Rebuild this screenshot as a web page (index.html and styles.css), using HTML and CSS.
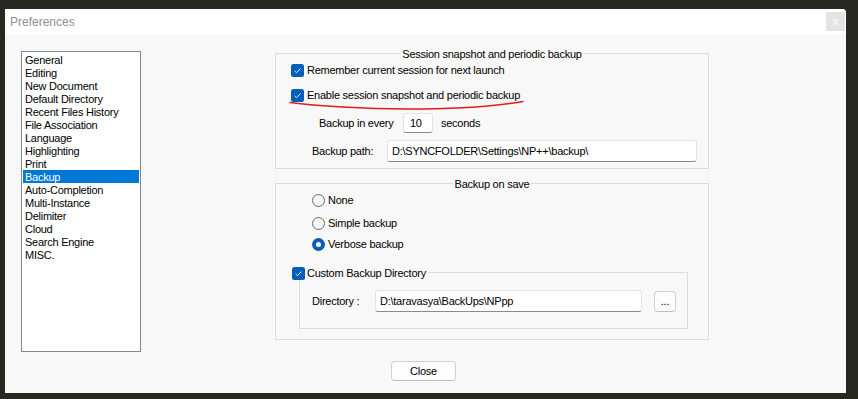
FILE: index.html
```html
<!DOCTYPE html>
<html lang="en">
<head>
    <meta charset="UTF-8">
    <title>Preferences</title>
    <link rel="stylesheet" href="styles.css">
</head>
<body>
    <!-- Preferences dialog -->
    <div class="dialog">
        <div class="titlebar">
            <span class="title">Preferences</span>
            <span class="close-x">x</span>
        </div>

        <div class="dialog-body">
            <div class="main">
                <ul class="page-list">
                    <li>General</li>
                    <li>Editing</li>
                    <li>New Document</li>
                    <li>Default Directory</li>
                    <li>Recent Files History</li>
                    <li>File Association</li>
                    <li>Language</li>
                    <li>Highlighting</li>
                    <li>Print</li>
                    <li class="selected">Backup</li>
                    <li>Auto-Completion</li>
                    <li>Multi-Instance</li>
                    <li>Delimiter</li>
                    <li>Cloud</li>
                    <li>Search Engine</li>
                    <li>MISC.</li>
                </ul>

                <div class="panel">
                    <!-- Session snapshot -->
                    <div class="group group-session">
                        <div class="group-title">Session snapshot and periodic backup</div>
                        <div class="row check-row row-remember">
                            <svg class="check" viewBox="0 0 13 13"><rect width="13" height="13" rx="2.5" fill="#005fb8"/><path d="M3.6 6.9 L5.5 8.7 L9.4 4.6" stroke="#fff" stroke-width="0.9" fill="none"/></svg>
                            <span>Remember current session for next launch</span>
                        </div>
                        <div class="row check-row row-snapshot">
                            <svg class="check" viewBox="0 0 13 13"><rect width="13" height="13" rx="2.5" fill="#005fb8"/><path d="M3.6 6.9 L5.5 8.7 L9.4 4.6" stroke="#fff" stroke-width="0.9" fill="none"/></svg>
                            <span>Enable session snapshot and periodic backup</span>
                            <svg class="scribble" width="260" height="30" viewBox="0 0 260 30"><path d="M14 14.5 C 40 18, 90 21, 130 21 C 180 21, 220 18, 247 13.5" stroke="#e31b1b" stroke-width="1.4" fill="none" stroke-linecap="round"/></svg>
                        </div>
                        <div class="row every-row">
                            <span class="every-label">Backup in every</span>
                            <span class="field field-seconds">10</span>
                            <span class="unit">seconds</span>
                        </div>
                        <div class="row path-row">
                            <span class="path-label">Backup path:</span>
                            <span class="field field-path">D:\SYNCFOLDER\Settings\NP++\backup\</span>
                        </div>
                    </div>

                    <!-- Backup on save -->
                    <div class="group group-save">
                        <div class="group-title">Backup on save</div>
                        <div class="row radio-row row-none"><span class="radio"></span><span>None</span></div>
                        <div class="row radio-row row-simple"><span class="radio"></span><span>Simple backup</span></div>
                        <div class="row radio-row row-verbose"><span class="radio on"></span><span>Verbose backup</span></div>

                        <div class="subgroup">
                            <div class="subgroup-title">
                                <svg class="check" viewBox="0 0 13 13"><rect width="13" height="13" rx="2.5" fill="#005fb8"/><path d="M3.6 6.9 L5.5 8.7 L9.4 4.6" stroke="#fff" stroke-width="0.9" fill="none"/></svg>
                                <span>Custom Backup Directory</span>
                            </div>
                            <div class="row dir-row">
                                <span class="dir-label">Directory :</span>
                                <span class="field field-dir">D:\taravasya\BackUps\NPpp</span>
                                <span class="btn btn-browse">...</span>
                            </div>
                        </div>
                    </div>
                </div>
            </div>

            <div class="footer">
                <button class="btn btn-close">Close</button>
            </div>
        </div>
    </div>
</body>
</html>
```

FILE: styles.css
```css
/* Base */
* {
    box-sizing: border-box;
}

html,
body {
    margin: 0;
    height: 399px;
    overflow: hidden;
}

body {
    background: #272822;
    padding: 9px 0 0 5px;
    font-family: 'Liberation Sans', Arial, sans-serif;
    font-size: 11px;
    letter-spacing: -0.25px;
    color: #000;
}

/* Dialog window */
.dialog {
    width: 841px;
    height: 384px;
    background: #f8f8f8;
    border-radius: 0 4px 0 0;
    overflow: hidden;
}

.titlebar {
    height: 25px;
    background: #fff;
    display: flex;
    align-items: center;
    padding-left: 5px;
}

.title {
    font-size: 12px;
    letter-spacing: 0;
    color: #8f8f8f;
}

.close-x {
    margin-left: auto;
    margin-right: 1px;
    align-self: flex-start;
    margin-top: 3px;
    width: 19px;
    height: 19px;
    background: #e4e4e4;
    color: #f7f7f7;
    font-weight: bold;
    text-align: center;
    line-height: 18px;
}

.dialog-body {
    padding: 17px 0 0 16px;
}

.main {
    display: flex;
    align-items: flex-start;
}

/* Page list */
.page-list {
    list-style: none;
    margin: 0;
    width: 120px;
    height: 301px;
    padding: 1px;
    background: #fff;
    border: 1px solid #828790;
}

.page-list li {
    height: 13px;
    line-height: 14px;
    padding-left: 2px;
    white-space: nowrap;
}

.page-list li.selected {
    background: #0078d7;
    color: #fff;
}

/* Right panel */
.panel {
    margin-left: 134px;
    margin-top: 2px;
    width: 434px;
}

.group {
    display: flex;
    flex-direction: column;
    border: 1px solid #dcdcdc;
}

.group-title {
    align-self: center;
    margin-top: -7px;
    padding: 0 2px;
    line-height: 14px;
    background: #f8f8f8;
}

.row {
    display: flex;
    align-items: center;
    white-space: nowrap;
}

.check {
    width: 13px;
    height: 13px;
    flex: none;
    margin-right: 3px;
}

/* Session snapshot group */
.group-session {
    height: 116px;
}

.check-row {
    height: 14px;
    padding-left: 15px;
    position: relative;
}

.row-remember {
    margin-top: 2px;
}

.row-snapshot {
    margin-top: 11px;
}

.scribble {
    position: absolute;
    left: 0;
    top: 0;
}

.every-row {
    margin-top: 11px;
    height: 20px;
    padding-left: 43px;
}

.every-label {
    width: 84px;
}

.unit {
    margin-left: 8px;
}

.path-row {
    margin-top: 7px;
    height: 22px;
    padding-left: 36px;
}

.path-label {
    width: 75px;
}

/* Text fields */
.field {
    display: flex;
    align-items: center;
    height: 100%;
    padding: 0 4px;
    background: #fff;
    border: 1px solid #e3e3e3;
    border-bottom-color: #8a8a8a;
    border-radius: 3px;
}

.field-seconds {
    width: 30px;
    padding-left: 6px;
}

.field-path {
    width: 310px;
}

/* Backup on save group */
.group-save {
    margin-top: 14px;
    height: 157px;
}

.radio-row {
    height: 14px;
    padding-left: 36px;
}

.row-none {
    margin-top: 2px;
}

.row-simple {
    margin-top: 9px;
}

.row-verbose {
    margin-top: 7px;
}

.radio {
    width: 13px;
    height: 13px;
    flex: none;
    margin-right: 3px;
    border-radius: 50%;
    border: 1px solid #6a6a6a;
    background: #f4f4f4;
    display: flex;
    align-items: center;
    justify-content: center;
}

.radio.on {
    border: none;
    background: #005fb8;
}

.radio.on::after {
    content: '';
    width: 5px;
    height: 5px;
    border-radius: 50%;
    background: #fff;
}

.subgroup {
    display: flex;
    flex-direction: column;
    margin: 21px 0 0 23px;
    width: 389px;
    height: 57px;
    border: 1px solid #dcdcdc;
}

.subgroup-title {
    display: flex;
    align-items: center;
    align-self: flex-start;
    height: 14px;
    margin: -7px 0 0 -8px;
    padding-right: 2px;
    background: #f8f8f8;
}

.subgroup-title .check {
    margin-right: 2px;
}

.dir-row {
    margin-top: 10px;
    height: 22px;
    padding-left: 12px;
}

.dir-label {
    width: 63px;
}

.field-dir {
    width: 267px;
}

/* Buttons */
.btn {
    font-family: inherit;
    font-size: 11px;
    letter-spacing: inherit;
    color: #000;
    background: #fdfdfd;
    border: 1px solid #d0d0d0;
    border-bottom-color: #bdbdbd;
    border-radius: 4px;
    display: flex;
    align-items: center;
    justify-content: center;
    padding: 0;
}

.btn-browse {
    margin-left: 12px;
    width: 22px;
    height: 21px;
}

.footer {
    display: flex;
    margin-top: 9px;
    padding-left: 370px;
}

.btn-close {
    width: 65px;
    height: 20px;
}
```
